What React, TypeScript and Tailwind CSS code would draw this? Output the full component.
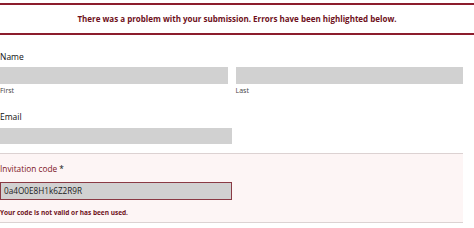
import React from "react";

export default function App() {
  return (
    <div className="w-[474px] h-[228px] bg-white overflow-hidden font-['Open_Sans',sans-serif]">
      <div className="mt-[3px] h-[32px] border-y-2 border-[#8c1d2d] flex items-center justify-center text-[8px] font-bold text-[#6e1020]">
        There was a problem with your submission. Errors have been highlighted below.
      </div>
      <div className="w-[463px]">
        <div className="mt-[16px] h-[12px] leading-[12px] text-[8.5px] text-[#111]">Name</div>
        <div className="mt-[4px] grid grid-cols-2 gap-x-[8px]">
          <div>
            <div className="h-[17px] bg-[#d1d1d1]" />
            <div className="mt-[2px] h-[10px] leading-[10px] text-[7px] text-[#444]">First</div>
          </div>
          <div>
            <div className="h-[17px] bg-[#d1d1d1]" />
            <div className="mt-[2px] h-[10px] leading-[10px] text-[7px] text-[#444]">Last</div>
          </div>
        </div>
        <div className="mt-[15px] h-[12px] leading-[12px] text-[8.5px] text-[#111]">Email</div>
        <div className="mt-[5px] h-[16px] w-[232px] bg-[#d1d1d1]" />
        <div className="mt-[9px] border-y border-[#dcd2d2] bg-[#fdf5f5] pt-[9px] pb-[4px]">
          <div className="h-[12px] leading-[12px] text-[8.3px] text-[#7e1424]">
            Invitation code <span className="text-[#111]">*</span>
          </div>
          <div className="mt-[7px] h-[18px] w-[232px] bg-[#d1d1d1] border border-[#8a3a44] flex items-center px-[3px] text-[8.2px] text-[#222]">
            0a4O0E8H1k6Z2R9R
          </div>
          <div className="mt-[8px] h-[10px] leading-[10px] text-[6.5px] font-bold text-[#6e1020]">
            Your code is not valid or has been used.
          </div>
        </div>
      </div>
    </div>
  );
}
